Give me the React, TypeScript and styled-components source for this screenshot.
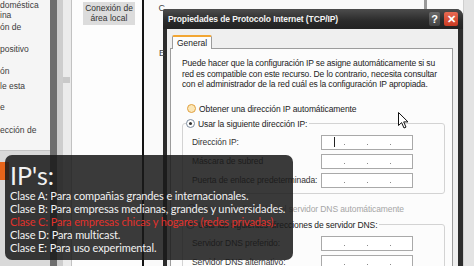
import React from 'react';
import styled, { createGlobalStyle } from 'styled-components';

const GlobalStyle = createGlobalStyle`
  html, body {
    margin: 0;
    padding: 0;
  }
  body {
    width: 474px;
    height: 266px;
    overflow: hidden;
    background: #f2f2f2;
  }
`;

const Screen = styled.div`
  position: relative;
  width: 474px;
  height: 266px;
  overflow: hidden;
  display: flex;
  font-family: 'Liberation Sans', Arial, sans-serif;
`;

/* ---------- windows behind the dialog ---------- */

const Sidebar = styled.div`
  width: 50px;
  flex: none;
  display: flex;
  flex-direction: column;
  background: #d9d9d9;
`;

const SideList = styled.div`
  height: 150px;
  background: #f5f5f5;
  border-bottom: 1px solid #c4c4c4;
  display: flex;
  flex-direction: column;
  overflow: hidden;
`;

const SideItem = styled.div<{ $gap: number }>`
  margin-top: ${p => p.$gap}px;
  font-size: 8.5px;
  line-height: 10px;
  color: #3c3c3c;
  white-space: nowrap;
`;

const SideSelected = styled.div`
  margin-top: 11px;
  height: 18px;
  width: 9px;
  background: #e8651a;
`;

const DarkBar = styled.div`
  width: 7px;
  flex: none;
  background: #6e6e6e;
`;

const GreyBar = styled.div`
  width: 6px;
  flex: none;
  background: #cdcdcd;
`;

const ScrollTrack = styled.div`
  width: 8px;
  flex: none;
  background: #ebebeb;
  border-right: 1px solid #c2c2c2;
  display: flex;
  flex-direction: column;
`;

const ScrollThumb = styled.div`
  margin-top: 77px;
  height: 6px;
  width: 7px;
  background: #c9c9c9;
`;

const IconPanel = styled.div`
  width: 70px;
  flex: none;
  background: #fdfdfd;
  display: flex;
  flex-direction: column;
  align-items: center;
  padding-top: 2px;
  box-sizing: border-box;
`;

const IconLabel = styled.div`
  margin-left: 4px;
  background: #dcdcdc;
  padding: 1px 2px 2px;
  font-size: 8.5px;
  line-height: 10px;
  color: #333;
  text-align: center;
`;

const FrameLine = styled.div`
  width: 2px;
  flex: none;
  background: #141414;
`;

const BehindGap = styled.div`
  width: 19px;
  flex: none;
  background: #fafafa;
  display: flex;
  flex-direction: column;
  align-items: flex-end;
`;

const BehindLetter = styled.div<{ $gap: number }>`
  margin-top: ${p => p.$gap}px;
  margin-right: -2px;
  font-size: 9px;
  line-height: 10px;
  color: #444;
  position: relative;
  z-index: 1;
`;

const RightStrip = styled.div`
  width: 11px;
  flex: none;
  background: #e3e3e3;
  border-left: 1px solid #cfcfcf;
  box-sizing: border-box;
`;

/* ---------- dialog ---------- */

const DialogColumn = styled.div`
  width: 300px;
  flex: none;
  display: flex;
  flex-direction: column;
  background: #fafafa;
`;

const TopStrip = styled.div`
  height: 9px;
  flex: none;
  display: flex;
  justify-content: flex-end;
  padding-right: 36px;
`;

const TopStripLine = styled.div`
  width: 3px;
  background: #9a9a9a;
`;

const Dialog = styled.div`
  flex: 1;
  display: flex;
  flex-direction: column;
  background: #2c2c2c;
  border-top-right-radius: 7px;
  border-top-left-radius: 3px;
  overflow: hidden;
`;

const TitleBar = styled.div`
  height: 20px;
  flex: none;
  display: flex;
  align-items: center;
  padding: 0 5px 0 5px;
  background: linear-gradient(#4d4d4d, #2a2a2a 60%, #222);
`;

const Title = styled.div`
  flex: 1;
  font-size: 8.5px;
  font-weight: bold;
  color: #f4f4f4;
  letter-spacing: -0.1px;
  white-space: nowrap;
`;

const TitleButton = styled.div<{ $close?: boolean }>`
  width: ${p => (p.$close ? 14 : 11)}px;
  height: 14px;
  margin-left: ${p => (p.$close ? 4 : 0)}px;
  border-radius: 2px;
  background: ${p => (p.$close ? 'linear-gradient(#e86a52, #c93a22)' : 'linear-gradient(#6a6a6a, #434343)')};
  color: #fff;
  font-size: 11px;
  font-weight: bold;
  display: flex;
  align-items: center;
  justify-content: center;
`;

const DialogBody = styled.div`
  flex: 1;
  margin: 0 5px 0 4px;
  background: #efefef;
  display: flex;
  flex-direction: column;
`;

const TabRow = styled.div`
  height: 19px;
  flex: none;
  display: flex;
  align-items: flex-end;
  padding-left: 5px;
`;

const Tab = styled.div`
  height: 12px;
  padding: 0 4px;
  margin-bottom: -1px;
  background: #fcfcfc;
  border: 1px solid #9c9c9c;
  border-top: 2px solid #f2a634;
  border-bottom: none;
  border-radius: 2px 2px 0 0;
  font-size: 8.5px;
  line-height: 12px;
  color: #222;
  position: relative;
  z-index: 1;
`;

const TabPanel = styled.div`
  flex: 1;
  margin: 0 5px 0 3px;
  background: #fcfcfc;
  border: 1px solid #9c9c9c;
  border-bottom: none;
  padding: 9px 7px 0 11px;
  display: flex;
  flex-direction: column;
`;

const Intro = styled.div`
  font-size: 8.5px;
  line-height: 10.5px;
  color: #222;
  letter-spacing: -0.15px;
`;

const OptionRow = styled.div<{ $gap: number; $muted?: boolean }>`
  margin-top: ${p => p.$gap}px;
  height: 12px;
  display: flex;
  align-items: center;
  gap: 3px;
  padding-left: 5px;
  font-size: 8.5px;
  color: ${p => (p.$muted ? '#a6a6a6' : '#222')};
  letter-spacing: -0.1px;
`;

const Radio = styled.span<{ $checked?: boolean; $hover?: boolean }>`
  width: 7px;
  height: 7px;
  border-radius: 50%;
  border: 1px solid ${p => (p.$hover ? '#e0a040' : '#7b8a9c')};
  background: ${p => (p.$hover ? '#fbe7b8' : '#fff')};
  display: flex;
  align-items: center;
  justify-content: center;
  &::after {
    content: '';
    width: 3px;
    height: 3px;
    border-radius: 50%;
    background: ${p => (p.$checked ? '#333' : 'transparent')};
  }
`;

const GroupBox = styled.fieldset<{ $gap: number }>`
  margin: ${p => p.$gap}px 0 0 0;
  padding: 5px 0 5px 9px;
  border: 1px solid #d3d3d3;
  border-radius: 3px;
  min-width: 0;
`;

const GroupLegend = styled.legend`
  margin-left: -6px;
  padding: 0 2px 0 0;
  height: 12px;
  display: flex;
  align-items: center;
  gap: 3px;
  font-size: 8.5px;
  color: #222;
  letter-spacing: -0.1px;
`;

const FieldRows = styled.div`
  display: flex;
  flex-direction: column;
  gap: 4px;
`;

const FieldRow = styled.div`
  display: flex;
  align-items: center;
  height: 15px;
`;

const FieldLabel = styled.div`
  width: 129px;
  font-size: 8.5px;
  color: #333;
  letter-spacing: -0.1px;
  white-space: nowrap;
`;

const IpField = styled.div`
  width: 92px;
  height: 15px;
  box-sizing: border-box;
  border: 1px solid #a9a9a9;
  background: #fff;
  display: flex;
`;

const Segment = styled.div<{ $last?: boolean }>`
  width: 23px;
  flex: none;
  display: flex;
  align-items: center;
  justify-content: ${p => (p.$last ? 'flex-start' : 'flex-end')};
  padding-left: 12px;
  box-sizing: border-box;
`;

const Caret = styled.span`
  width: 1px;
  height: 10px;
  background: #222;
  margin-right: auto;
`;

const Dot = styled.span`
  width: 1px;
  height: 1px;
  margin-top: 5px;
  background: #8a8a8a;
`;

/* ---------- overlays ---------- */

const Pointer = styled.svg`
  position: absolute;
  left: 398px;
  top: 112px;
`;

const Caption = styled.div`
  position: absolute;
  left: 5px;
  top: 155px;
  width: 288px;
  height: 105px;
  box-sizing: border-box;
  padding: 6px 0 0 5px;
  border-radius: 7px;
  background: rgba(26, 26, 26, 0.86);
  font-family: Lato, 'Open Sans', sans-serif;
  color: #f2f2f2;
`;

const CaptionTitle = styled.div`
  font-size: 25px;
  line-height: 28px;
  margin-bottom: 0px;
`;

const CaptionLine = styled.div<{ $hot?: boolean }>`
  font-size: 11px;
  line-height: 13px;
  letter-spacing: -0.12px;
  white-space: nowrap;
  color: ${p => (p.$hot ? '#e2312b' : '#f2f2f2')};
`;

const sideItems: [string, number][] = [
  ['doméstica', 0],
  ['ina', 0],
  ['ón de', 2],
  ['positivo', 12],
  ['ón', 12],
  ['le esta', 5],
  ['e', 11],
  ['ección de', 13],
];

const IpInput: React.FC<{ focused?: boolean }> = ({ focused }) => (
  <IpField>
    <Segment>{focused && <Caret />}<Dot /></Segment>
    <Segment><Dot /></Segment>
    <Segment><Dot /></Segment>
    <Segment $last />
  </IpField>
);

const classes = [
  { text: 'Clase A: Para compañias grandes e internacionales.' },
  { text: 'Clase B: Para empresas medianas, grandes y universidades.' },
  { text: 'Clase C: Para empresas chicas y hogares (redes privadas).', hot: true },
  { text: 'Clase D: Para multicast.' },
  { text: 'Clase E:  Para uso experimental.' },
];

export default function App() {
  return (
    <>
      <GlobalStyle />
      <Screen>
        <Sidebar>
          <SideList>
            {sideItems.map(([t, g]) => (
              <SideItem key={t} $gap={g}>{t}</SideItem>
            ))}
          </SideList>
          <SideSelected />
        </Sidebar>
        <DarkBar />
        <GreyBar />
        <ScrollTrack>
          <ScrollThumb />
        </ScrollTrack>
        <IconPanel>
          <IconLabel>
            Conexión de
            <br />
            área local
          </IconLabel>
        </IconPanel>
        <FrameLine />
        <BehindGap>
          <BehindLetter $gap={3}>C</BehindLetter>
          <BehindLetter $gap={35}>E</BehindLetter>
        </BehindGap>

        <DialogColumn>
          <TopStrip>
            <TopStripLine />
          </TopStrip>
          <Dialog>
            <TitleBar>
              <Title>Propiedades de Protocolo Internet (TCP/IP)</Title>
              <TitleButton>?</TitleButton>
              <TitleButton $close>✕</TitleButton>
            </TitleBar>
            <DialogBody>
              <TabRow>
                <Tab>General</Tab>
              </TabRow>
              <TabPanel>
                <Intro>
                  Puede hacer que la configuración IP se asigne automáticamente si su
                  <br />
                  red es compatible con este recurso. De lo contrario, necesita consultar
                  <br />
                  con el administrador de la red cuál es la configuración IP apropiada.
                </Intro>
                <OptionRow $gap={13}>
                  <Radio $hover />
                  Obtener una dirección IP automáticamente
                </OptionRow>
                <GroupBox $gap={3}>
                  <GroupLegend>
                    <Radio $checked />
                    Usar la siguiente dirección IP:
                  </GroupLegend>
                  <FieldRows>
                    <FieldRow>
                      <FieldLabel>Dirección IP:</FieldLabel>
                      <IpInput focused />
                    </FieldRow>
                    <FieldRow>
                      <FieldLabel>Máscara de subred</FieldLabel>
                      <IpInput />
                    </FieldRow>
                    <FieldRow>
                      <FieldLabel>Puerta de enlace predeterminada:</FieldLabel>
                      <IpInput />
                    </FieldRow>
                  </FieldRows>
                </GroupBox>
                <OptionRow $gap={9} $muted>
                  <Radio />
                  Obtener la dirección del servidor DNS automáticamente
                </OptionRow>
                <GroupBox $gap={4}>
                  <GroupLegend>
                    <Radio $checked />
                    Usar las siguientes direcciones de servidor DNS:
                  </GroupLegend>
                  <FieldRows>
                    <FieldRow>
                      <FieldLabel>Servidor DNS preferido:</FieldLabel>
                      <IpInput />
                    </FieldRow>
                    <FieldRow>
                      <FieldLabel>Servidor DNS alternativo:</FieldLabel>
                      <IpInput />
                    </FieldRow>
                  </FieldRows>
                </GroupBox>
              </TabPanel>
            </DialogBody>
          </Dialog>
        </DialogColumn>
        <RightStrip />

        <Pointer width="11" height="17" viewBox="0 0 11 17">
          <path d="M0.5 0.5 L0.5 13.5 L3.6 10.6 L6 16 L8 15.1 L5.7 9.9 L10 9.9 Z" fill="#fff" stroke="#111" strokeWidth="1" />
        </Pointer>

        <Caption>
          <CaptionTitle>IP's:</CaptionTitle>
          {classes.map(c => (
            <CaptionLine key={c.text} $hot={c.hot}>{c.text}</CaptionLine>
          ))}
        </Caption>
      </Screen>
    </>
  );
}
